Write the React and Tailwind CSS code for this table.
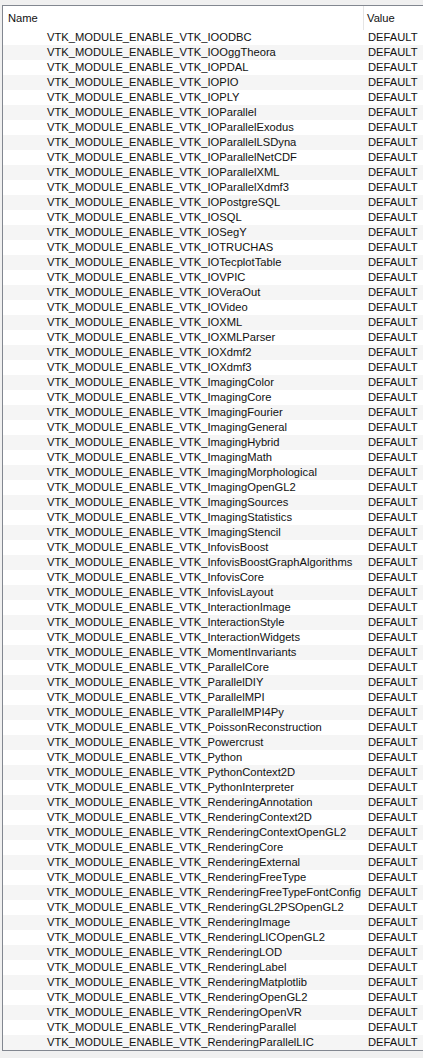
const modules = [
  'IOODBC', 'IOOggTheora', 'IOPDAL', 'IOPIO', 'IOPLY', 'IOParallel', 'IOParallelExodus',
  'IOParallelLSDyna', 'IOParallelNetCDF', 'IOParallelXML', 'IOParallelXdmf3', 'IOPostgreSQL',
  'IOSQL', 'IOSegY', 'IOTRUCHAS', 'IOTecplotTable', 'IOVPIC', 'IOVeraOut', 'IOVideo', 'IOXML',
  'IOXMLParser', 'IOXdmf2', 'IOXdmf3', 'ImagingColor', 'ImagingCore', 'ImagingFourier',
  'ImagingGeneral', 'ImagingHybrid', 'ImagingMath', 'ImagingMorphological', 'ImagingOpenGL2',
  'ImagingSources', 'ImagingStatistics', 'ImagingStencil', 'InfovisBoost',
  'InfovisBoostGraphAlgorithms', 'InfovisCore', 'InfovisLayout', 'InteractionImage',
  'InteractionStyle', 'InteractionWidgets', 'MomentInvariants', 'ParallelCore', 'ParallelDIY',
  'ParallelMPI', 'ParallelMPI4Py', 'PoissonReconstruction', 'Powercrust', 'Python',
  'PythonContext2D', 'PythonInterpreter', 'RenderingAnnotation', 'RenderingContext2D',
  'RenderingContextOpenGL2', 'RenderingCore', 'RenderingExternal', 'RenderingFreeType',
  'RenderingFreeTypeFontConfig', 'RenderingGL2PSOpenGL2', 'RenderingImage',
  'RenderingLICOpenGL2', 'RenderingLOD', 'RenderingLabel', 'RenderingMatplotlib',
  'RenderingOpenGL2', 'RenderingOpenVR', 'RenderingParallel', 'RenderingParallelLIC',
];

export default function App() {
  return (
    <div className="w-[423px] h-[1058px] overflow-hidden bg-[#f0f0f0] pt-[5px] pl-[2px] text-[11.2px] text-[#111] font-['Liberation_Sans',Arial,sans-serif]">
      <div className="border-t border-l border-b border-[#828790] bg-white">
        {/* header */}
        <div className="flex h-[24px] items-center">
          <div className="w-[361px] h-full flex items-center pl-[5px] border-r border-[#e5e5e5]">Name</div>
          <div className="pl-[3px]">Value</div>
        </div>
        {modules.map((m, i) => (
          <div key={m} className={`flex h-[15px] items-center leading-[15px] ${i % 2 === 1 ? 'bg-[#f5f5f5]' : 'bg-white'}`}>
            <div className="w-[362px] pl-[44px] whitespace-nowrap">VTK_MODULE_ENABLE_VTK_{m}</div>
            <div className="pl-[3px]">DEFAULT</div>
          </div>
        ))}
      </div>
    </div>
  );
}
